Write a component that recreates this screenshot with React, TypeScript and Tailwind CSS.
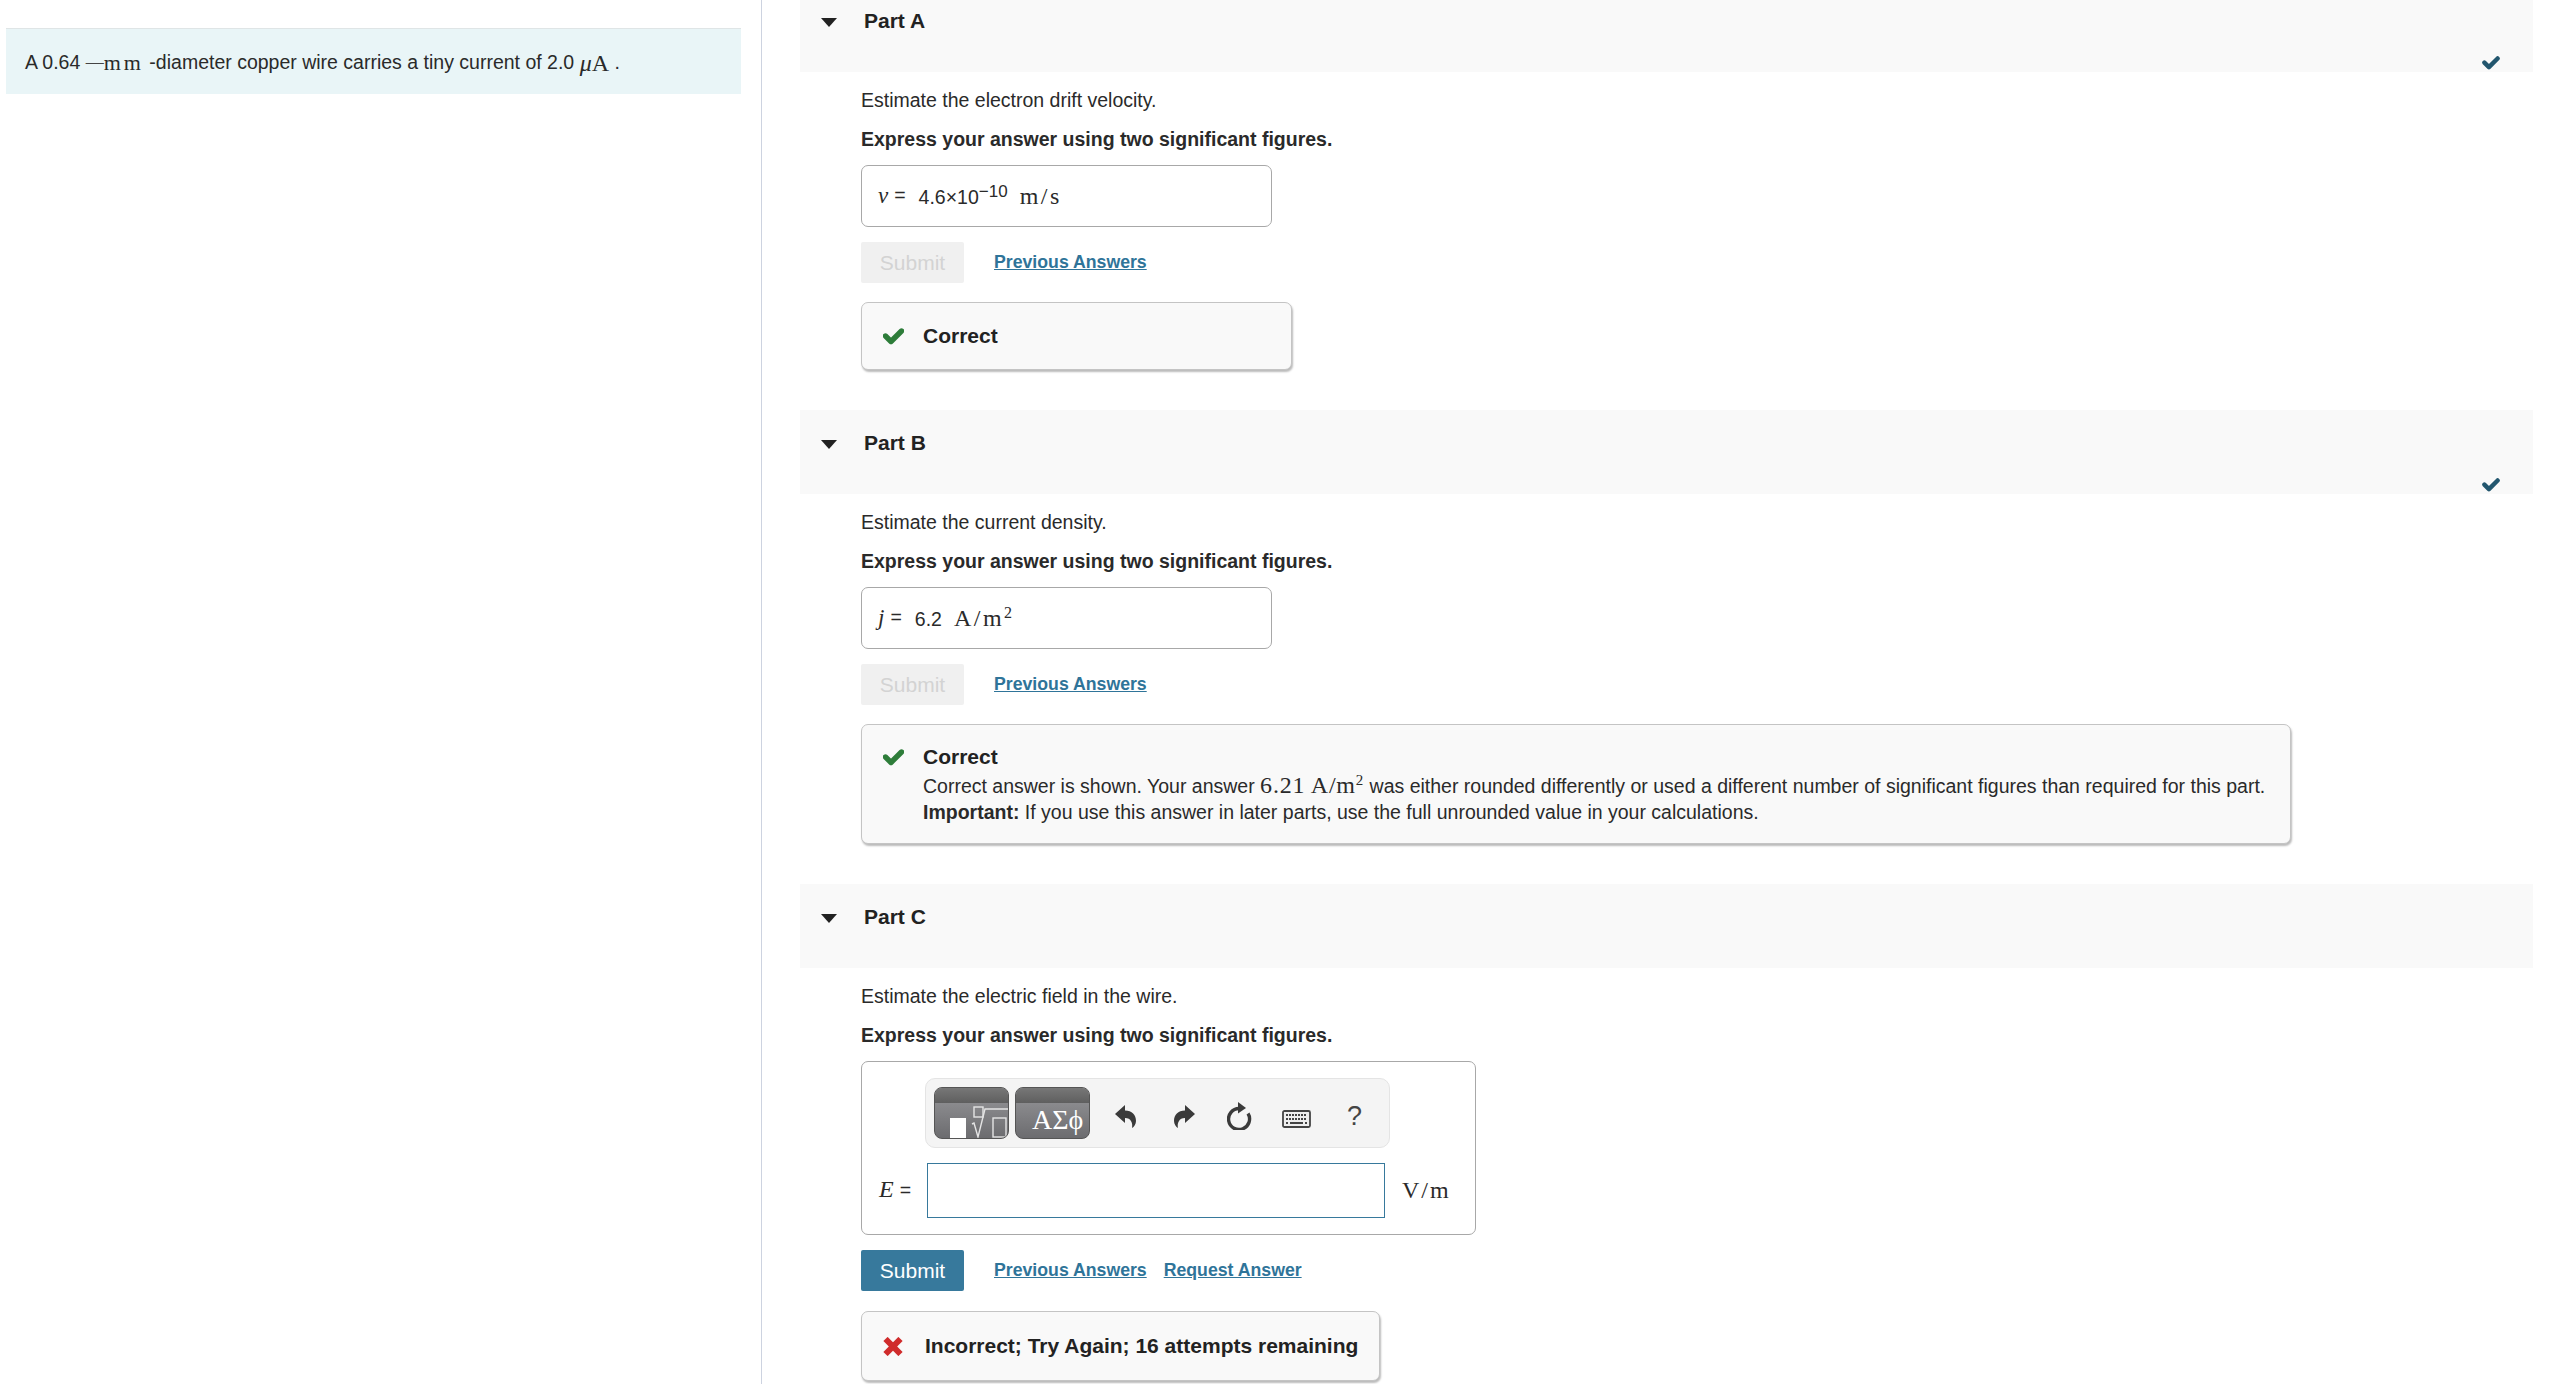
import type { ReactNode } from "react";

const serif = "font-['Liberation_Serif',serif]";

function CheckMark({ className }: { className: string }) {
  return (
    <svg viewBox="0 0 21 17" fill="none" className={className}>
      <path d="M2.500 8l5.500 5.500L18.500 3" stroke="currentColor" strokeWidth="5.4" strokeLinejoin="round" strokeLinecap="round" />
    </svg>
  );
}

function Part({ name, done = true, children }: { name: string; done?: boolean; children: ReactNode }) {
  return (
    <section className="mb-10">
      <div className="flex h-[84px] justify-between bg-[#f9f9f9] pl-[21px] pr-[33px]">
        <div className="flex items-start pt-[21px]">
          <svg width="16" height="9" viewBox="0 0 16 9" className="mt-[9px] fill-[#222]">
            <path d="M0 0h16L8 9z" />
          </svg>
          <h2 className="ml-[27px] text-[21px] font-bold leading-[24px] text-[#222]">{name}</h2>
        </div>
        {done && <CheckMark className="mb-[2px] h-[14px] w-[18px] self-end text-[#22566e]" />}
      </div>
      <div className="pl-[61px]">{children}</div>
    </section>
  );
}

function Question({ text }: { text: string }) {
  return (
    <>
      <p className="mt-[14px] h-7 text-[19.5px] leading-7 text-[#2a2a2a]">{text}</p>
      <p className="mt-[11px] h-7 text-[19.5px] font-bold leading-7 text-[#2a2a2a]">
        Express your answer using two significant figures.
      </p>
    </>
  );
}

function DoneAnswer({ children }: { children: ReactNode }) {
  return (
    <div className="mt-3 flex h-[62px] w-[411px] items-center rounded-[7px] border border-[#a8a8a8] pl-4 text-[19.5px] text-[#2a2a2a]">
      {children}
    </div>
  );
}

function LinkText({ children }: { children: ReactNode }) {
  return <a className="text-[17.7px] font-bold text-[#2f7499] underline">{children}</a>;
}

function DisabledRow() {
  return (
    <div className="mt-[15px] flex h-[41px] items-center">
      <button className="h-full w-[103px] rounded-[2px] bg-[#f0f0f0] text-[21px] text-[#d3d3d3]">Submit</button>
      <span className="ml-[30px]">
        <LinkText>Previous Answers</LinkText>
      </span>
    </div>
  );
}

function PaletteButton({ children }: { children: ReactNode }) {
  return (
    <div className="relative h-[52px] w-[75px] overflow-hidden rounded-[8px] border border-[#555] bg-gradient-to-b from-[#98989b] to-[#6c6c6f]">
      <div className="h-[15px] bg-gradient-to-b from-[#777] to-[#5f5f5f]" />
      {children}
    </div>
  );
}

function Toolbar() {
  return (
    <div className="ml-[63px] mt-4 flex h-[70px] w-[465px] items-center rounded-[10px] border border-[#e4e4e4] bg-[#f4f4f4] pl-2">
      <PaletteButton>
        <svg width="75" height="52" viewBox="0 0 75 52" fill="none" className="absolute left-0 top-0">
          <rect x="15" y="30" width="16" height="22" fill="#fff" />
          <g stroke="#e4e4e4" strokeWidth="1.4">
            <rect x="39" y="19" width="9" height="10" />
            <path d="M37 36l2-1 4 14 7-28h24" />
            <rect x="58" y="30" width="13" height="19" />
          </g>
        </svg>
      </PaletteButton>
      <div className="ml-1.5">
        <PaletteButton>
          <div className={`${serif} pl-4 text-[28px] leading-[33px] text-white`}>ΑΣϕ</div>
        </PaletteButton>
      </div>
      <div className="ml-[25px] mt-1.5 flex items-center text-[#3a3a3a]">
        <svg width="21" height="24" viewBox="0 0 21 24" fill="currentColor">
          <path d="M0 10L10 1v5.500c7 0 11 4.500 11 10.500 0 3-2 6-4 7 1-5-1-10-7-10V19z" />
        </svg>
        <svg width="21" height="24" viewBox="0 0 21 24" fill="currentColor" className="ml-[38px] -scale-x-100">
          <path d="M0 10L10 1v5.500c7 0 11 4.500 11 10.500 0 3-2 6-4 7 1-5-1-10-7-10V19z" />
        </svg>
        <svg width="25" height="28" viewBox="0 0 25 28" fill="none" className="ml-8">
          <path d="M12 6.500A10.500 10.500 0 1 0 21 11.500" stroke="currentColor" strokeWidth="3.4" />
          <path d="M11 0l8 6-8 5.500z" fill="currentColor" />
        </svg>
        <svg width="29" height="18" viewBox="0 0 29 18" className="ml-[30px] mt-1.5">
          <rect x="1" y="1" width="27" height="16" rx="1.500" fill="#eee" stroke="#444" strokeWidth="1.800" />
          <path d="M4 5h21M4 9h21" stroke="#444" strokeWidth="2.200" strokeDasharray="2 1" />
          <path d="M4 13h2M8 13h13M23 13h2" stroke="#444" strokeWidth="2.200" />
        </svg>
        <span className="ml-9 text-[27px] leading-none text-[#444]">?</span>
      </div>
    </div>
  );
}

export default function App() {
  return (
    <div className="flex h-[1384px] w-[2550px] overflow-hidden bg-white font-['Liberation_Sans',sans-serif] text-[#2a2a2a]">
      <aside className="h-full w-[762px] shrink-0 border-r border-[#cdd3e0] pl-1.5 pr-5 pt-7">
        <div className="flex h-[66px] items-center whitespace-pre border-t border-[#dfe5e6] bg-[#e9f5f7] pl-[19px] pt-0.5 text-[19.5px]">
          A 0.64 <span className={`${serif} text-[18px] text-[#444]`}>—</span>
          <span className={`${serif} text-[22px] tracking-[3px]`}>mm</span> -diameter copper wire carries a tiny current of 2.0{" "}
          <span className={`${serif} text-[24px]`}><i>μ</i>A</span> .
        </div>
      </aside>

      <main className="-mt-3 ml-[38px] w-[1733px]">
        <Part name="Part A">
          <Question text="Estimate the electron drift velocity." />
          <DoneAnswer>
            <i className={`${serif} text-[23px]`}>v</i>
            <span className="ml-1.5">=</span>
            <span className="ml-[13px] mt-1">4.6×10</span>
            <span className="relative -top-[5px] text-[17px] leading-none">−10</span>
            <span className={`${serif} ml-3 text-[24px] tracking-[2.5px]`}>m/s</span>
          </DoneAnswer>
          <DisabledRow />
          <div className="mt-[19px] flex h-[68px] w-[431px] items-center rounded-[7px] border border-[#c4c4c4] bg-[#f9f9f9] pl-[21px] shadow-[1px_2px_2px_#bbb]">
            <CheckMark className="h-[17px] w-[21px] text-[#2e7d3a]" />
            <strong className="ml-[19px] text-[21px] text-[#222]">Correct</strong>
          </div>
        </Part>

        <Part name="Part B">
          <Question text="Estimate the current density." />
          <DoneAnswer>
            <i className={`${serif} text-[23px]`}>j</i>
            <span className="ml-1.5">=</span>
            <span className="ml-[13px] mt-1">6.2</span>
            <span className={`${serif} ml-3 text-[24px] tracking-[2.5px]`}>
              A/m<sup className="text-[16px]">2</sup>
            </span>
          </DoneAnswer>
          <DisabledRow />
          <div className="mt-[19px] flex h-[120px] w-[1430px] items-start rounded-[7px] border border-[#c4c4c4] bg-[#f9f9f9] pl-[21px] pt-[19px] shadow-[1px_2px_2px_#bbb]">
            <CheckMark className="mt-[5px] h-[17px] w-[21px] shrink-0 text-[#2e7d3a]" />
            <div className="ml-[19px] text-[19.5px] leading-[26.5px] text-[#2a2a2a]">
              <strong className="block text-[21px] leading-[26px] text-[#222]">Correct</strong>
              <p className="mt-[2.500px]">
                Correct answer is shown. Your answer{" "}
                <span className={`${serif} text-[24px] leading-none tracking-[0.8px]`}>
                  6.21 A/m<sup className="text-[15px]">2</sup>
                </span>{" "}
                was either rounded differently or used a different number of significant figures than required for this part.
              </p>
              <p>
                <strong>Important:</strong> If you use this answer in later parts, use the full unrounded value in your calculations.
              </p>
            </div>
          </div>
        </Part>

        <Part name="Part C" done={false}>
          <Question text="Estimate the electric field in the wire." />
          <div className="mt-3 h-[174px] w-[615px] rounded-[7px] border border-[#a8a8a8]">
            <Toolbar />
            <div className="mt-[15px] flex h-[55px] items-center">
              <span className={`${serif} -mt-1 ml-[17px] w-[48px] text-[24px]`}>
                <i>E</i> <span className="font-['Liberation_Sans',sans-serif] text-[19.5px]">=</span>
              </span>
              <input className="h-full w-[458px] border border-[#37799c] bg-white outline-none" />
              <span className={`${serif} -mt-0.5 ml-[17px] text-[24px] tracking-[2px]`}>V/m</span>
            </div>
          </div>
          <div className="mt-[15px] flex h-[41px] items-center">
            <button className="h-full w-[103px] rounded-[2px] bg-[#37799c] text-[21px] text-white">Submit</button>
            <span className="ml-[30px]">
              <LinkText>Previous Answers</LinkText>
            </span>
            <span className="ml-[17px]">
              <LinkText>Request Answer</LinkText>
            </span>
          </div>
          <div className="mt-5 flex h-[70px] w-[519px] items-center rounded-[7px] border border-[#c4c4c4] bg-[#f9f9f9] pl-[21px] shadow-[1px_2px_2px_#bbb]">
            <svg width="20" height="19" viewBox="0 0 20 19" className="shrink-0">
              <path d="M2.500 2l15 15M17.500 2l-15 15" stroke="#d02c2c" strokeWidth="6" />
            </svg>
            <strong className="ml-[22px] text-[21px] text-[#222]">Incorrect; Try Again; 16 attempts remaining</strong>
          </div>
        </Part>
      </main>
    </div>
  );
}
